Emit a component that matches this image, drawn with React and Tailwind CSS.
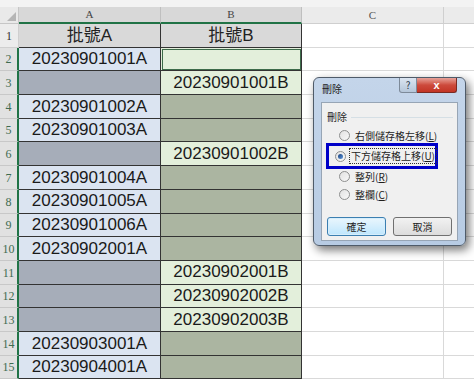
import React from 'react';

const rows = [
  ['20230901001A', ''],
  ['', '20230901001B'],
  ['20230901002A', ''],
  ['20230901003A', ''],
  ['', '20230901002B'],
  ['20230901004A', ''],
  ['20230901005A', ''],
  ['20230901006A', ''],
  ['20230902001A', ''],
  ['', '20230902001B'],
  ['', '20230902002B'],
  ['', '20230902003B'],
  ['20230903001A', ''],
  ['20230904001A', ''],
];

const cellFont = { fontFamily: '"Liberation Sans", "Noto Sans CJK TC", sans-serif' };

function Radio({ checked }) {
  return (
    <span className="relative inline-flex h-[11px] w-[11px] shrink-0 items-center justify-center rounded-full border border-[#8e8f8f] bg-gradient-to-br from-[#e2e2e2] to-[#f8f8f8]">
      {checked && <span className="h-[5px] w-[5px] rounded-full bg-gradient-to-br from-[#1a3f7a] to-[#5f9ae0]" />}
    </span>
  );
}

function Dialog() {
  return (
    <div
      className="absolute left-[313px] top-[77px] h-[169px] w-[153px] rounded-[6px] border border-[#4f5b69] bg-gradient-to-b from-[#c4d5ea] to-[#b7cbe3] shadow-[3px_4px_10px_rgba(0,0,0,0.55)]"
      style={{ fontFamily: '"Noto Sans CJK TC", "Liberation Sans", sans-serif' }}
    >
      <div className="flex h-[24px] items-start justify-between pl-[8px]">
        <span className="mt-[6px] text-[10px] leading-none text-[#1c1c1c]">刪除</span>
        <div className="flex">
          <div className="flex h-[15px] w-[18px] items-center justify-center rounded-bl-[3px] border border-t-0 border-[#7d8a99] bg-gradient-to-b from-[#dbe5f1] to-[#b5c6d9] text-[10px] leading-none text-[#2c3a4a]">?</div>
          <div className="mr-[8px] flex h-[15px] w-[40px] items-center justify-center rounded-br-[3px] border border-l-0 border-t-0 border-[#7a2a22] bg-gradient-to-b from-[#e6a199] via-[#cd4a3c] to-[#c23424] text-[11px] font-bold leading-none text-white" style={{ fontFamily: '"Liberation Sans", sans-serif' }}>x</div>
        </div>
      </div>
      <div className="mx-[7px] h-[139px] border border-[#97a5b5] bg-[#f0f0f0] px-[4px] pt-[9px] text-[10px] leading-none text-[#1e1e1e]">
        <div className="flex h-[10px] items-center gap-[4px] pl-px">
          <span className="whitespace-nowrap">刪除</span>
          <span className="h-px flex-1 bg-[#d5dfe5]" />
        </div>
        <div className="mt-[8px] flex h-[11px] items-center gap-[5px] pl-[13px]">
          <Radio />
          <span className="whitespace-nowrap">右側儲存格左移(<u>L</u>)</span>
        </div>
        <div className="mt-[2px] flex h-[26px] w-[112px] items-center gap-[3px] border-[3px] border-[#0000c8] pl-[6px]">
          <Radio checked />
          <span className="whitespace-nowrap border border-dotted border-[#333] px-px py-[2px]">下方儲存格上移(<u>U</u>)</span>
        </div>
        <div className="mt-[2px] flex h-[11px] items-center gap-[5px] pl-[13px]">
          <Radio />
          <span className="whitespace-nowrap">整列(<u>R</u>)</span>
        </div>
        <div className="mt-[7px] flex h-[11px] items-center gap-[5px] pl-[13px]">
          <Radio />
          <span className="whitespace-nowrap">整欄(<u>C</u>)</span>
        </div>
        <div className="mt-[17px] flex justify-between px-px">
          <div className="flex h-[19px] w-[59px] items-center justify-center rounded-[3px] border border-[#3c7fb1] bg-gradient-to-b from-[#eaf6fd] to-[#bee6fd] shadow-[inset_0_0_0_1px_#d6eefc]">確定</div>
          <div className="flex h-[19px] w-[59px] items-center justify-center rounded-[3px] border border-[#707070] bg-gradient-to-b from-[#f2f2f2] to-[#dcdcdc]">取消</div>
        </div>
      </div>
    </div>
  );
}

export default function App() {
  return (
    <div className="relative h-[382px] w-[474px] overflow-hidden bg-white">
      <div className="h-[7px] bg-[#f3f3f3]" />
      <div className="grid grid-cols-[19px_142px_141px_142px_1fr] grid-rows-[17px_repeat(15,23.7px)]">
        {/* column headers */}
        <div className="relative border-b border-r border-[#c6c6c6] bg-[#e9e9e9]">
          <span className="absolute bottom-[2px] right-[2px] h-0 w-0 border-b-[9px] border-l-[9px] border-b-[#b5b5b5] border-l-transparent" />
        </div>
        {['A', 'B'].map((c) => (
          <div key={c} className="flex items-center justify-center border-b-2 border-r border-b-[#217346] border-r-[#bfbfbf] bg-[#d8d8d8] text-[11px] text-[#444]" style={{ fontFamily: '"Liberation Serif", serif' }}>{c}</div>
        ))}
        <div className="flex items-center justify-center border-b border-r border-[#cfcfcf] bg-[#ebebeb] text-[11px] text-[#555]" style={{ fontFamily: '"Liberation Serif", serif' }}>C</div>
        <div className="border-b border-[#cfcfcf] bg-[#ebebeb]" />

        {/* row 1 */}
        <div className="flex items-end justify-center border-b border-r border-[#cfcfcf] bg-[#ececec] pb-[2px] text-[12px] text-[#333]" style={{ fontFamily: '"Liberation Serif", serif' }}>1</div>
        <div className="flex items-center justify-center border-b border-r border-[#333] bg-[#d9d9d9] text-[17px] text-[#222]" style={cellFont}>批號A</div>
        <div className="flex items-center justify-center border-b border-r border-[#333] bg-[#d9d9d9] text-[17px] text-[#222]" style={cellFont}>批號B</div>
        <div className="border-b border-r border-[#d9d9d9]" />
        <div className="border-b border-[#d9d9d9]" />

        {rows.map(([a, b], i) => {
          const n = i + 2;
          return (
            <React.Fragment key={n}>
              <div className="flex items-end justify-center border-b border-r-2 border-b-[#c8c8c8] border-r-[#217346] bg-[#e1e1e1] pb-[2px] text-[12px] text-[#3f6b50]" style={{ fontFamily: '"Liberation Serif", serif' }}>{n}</div>
              <div className={`flex items-center justify-center border-b border-r border-[#333] text-[17px] text-[#1a1a1a] ${a ? 'bg-[#dbe4f1]' : 'bg-[#a6adb9]'}`} style={cellFont}>{a}</div>
              <div className={`flex items-center justify-center border-b border-r border-[#333] text-[17px] text-[#1a1a1a] ${b || n === 2 ? 'bg-[#e3efdb]' : 'bg-[#abb5a1]'} ${n === 2 ? 'outline outline-1 -outline-offset-2 outline-[#3d6b4a]' : ''}`} style={cellFont}>{b}</div>
              <div className="border-b border-r border-[#d9d9d9]" />
              <div className="border-b border-[#d9d9d9]" />
            </React.Fragment>
          );
        })}
      </div>
      <Dialog />
    </div>
  );
}
